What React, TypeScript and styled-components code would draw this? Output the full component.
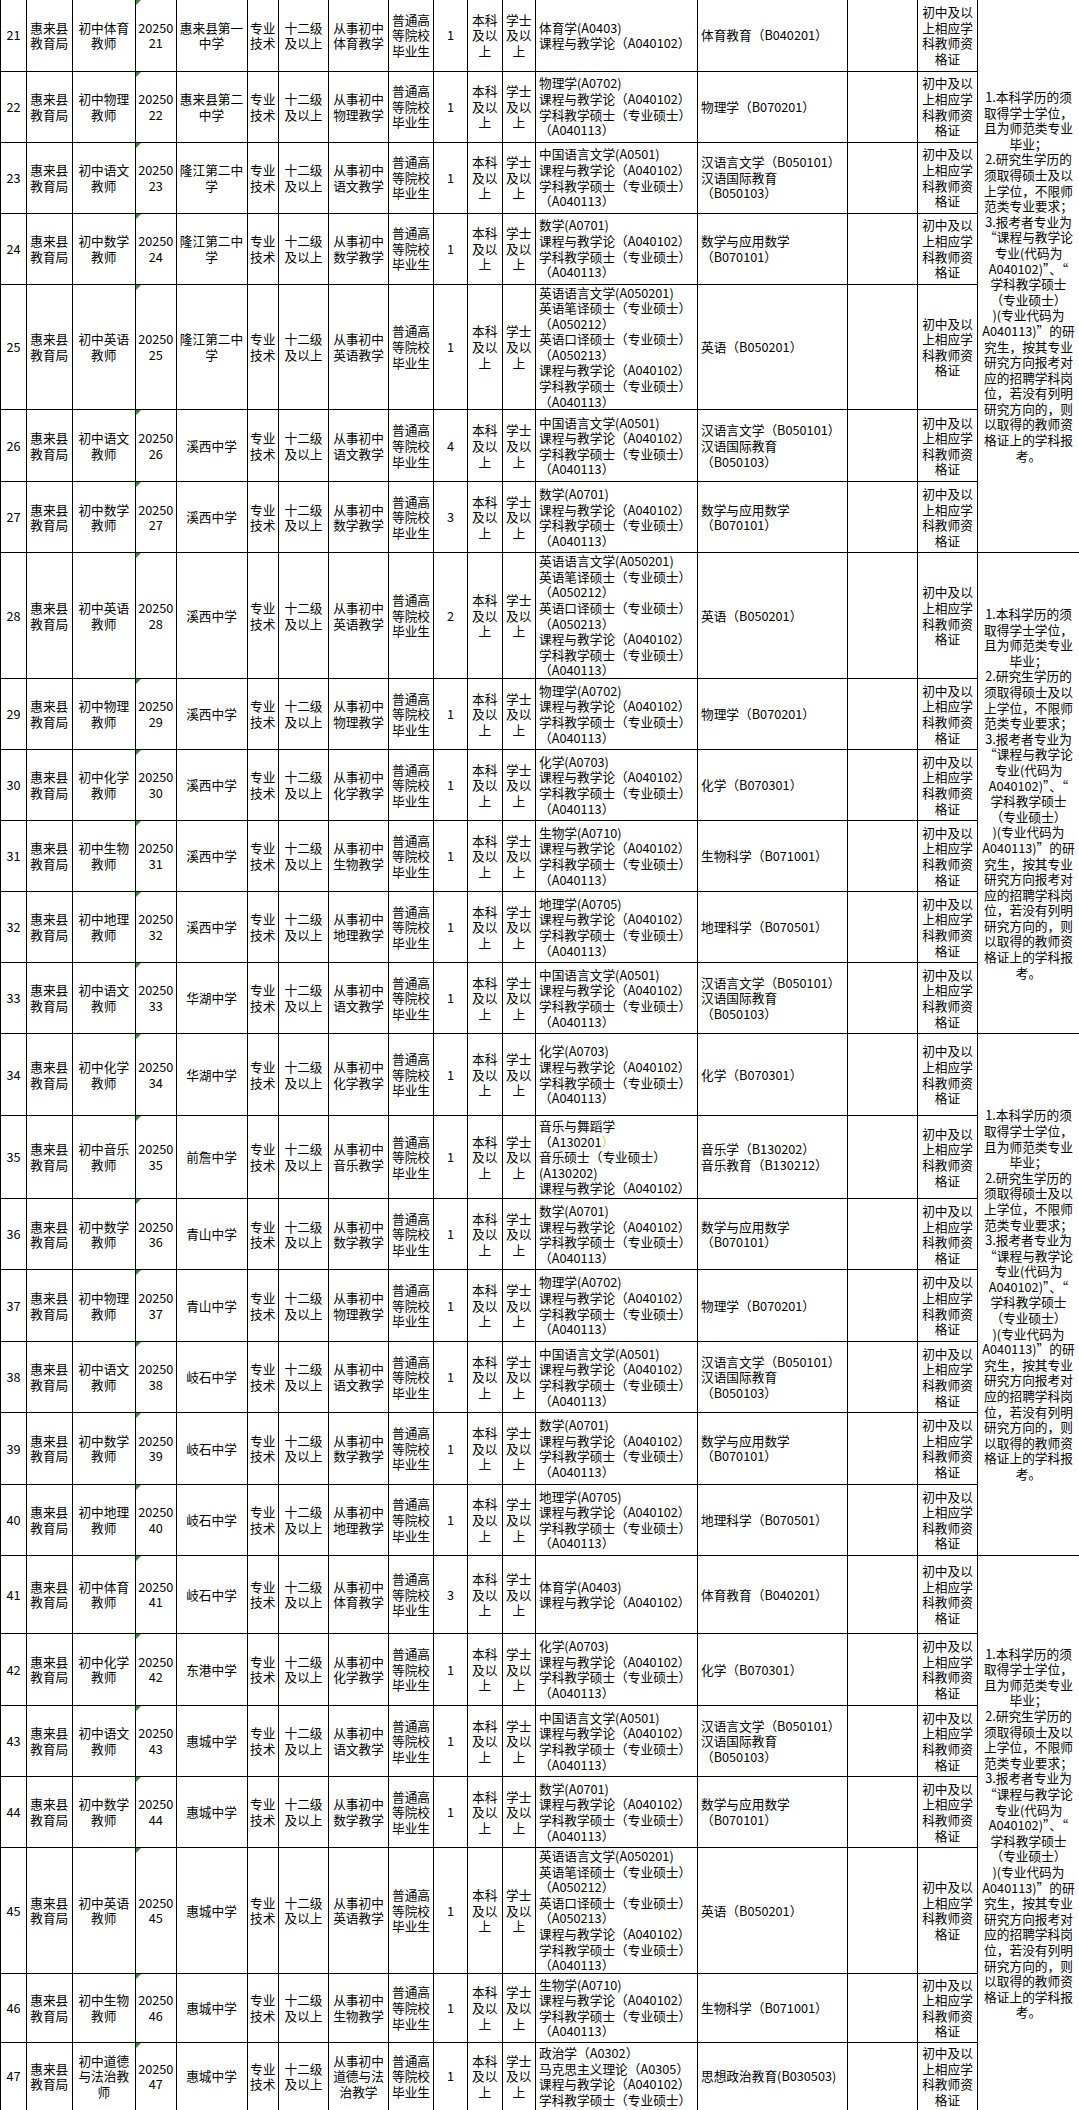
import React from "react";
import styled, { createGlobalStyle } from "styled-components";

const GlobalStyle = createGlobalStyle`
  html, body {
    margin: 0;
    padding: 0;
    background: #fff;
  }
  body {
    font-family: "Noto Sans CJK SC", "Noto Sans", sans-serif;
    color: #000;
  }
`;

const Sheet = styled.table`
  border-collapse: collapse;
  table-layout: fixed;
  width: 1079px;
  font-size: 12.7px;
  line-height: 15.6px;
`;

const Row = styled.tr<{ $h: number }>`
  height: ${(p) => p.$h}px;
  &:first-child td {
    border-top: none;
  }
`;

const Cell = styled.td<{ $left?: boolean }>`
  border: 1px solid #000;
  padding: ${(p) => (p.$left ? "0 2px 0 3px" : "0 1px")};
  text-align: ${(p) => (p.$left ? "left" : "center")};
  vertical-align: middle;
  white-space: pre;
  overflow: hidden;
`;

// excel "number stored as text" marker
const CodeCell = styled(Cell)`
  position: relative;
  &::before {
    content: "";
    position: absolute;
    top: 0;
    left: 0;
    border-top: 5px solid #1f9a2b;
    border-right: 5px solid transparent;
  }
`;

const NoteCell = styled(Cell)`
  padding: 0 1px;
`;

const Stray = styled.span`
  color: #e0cf3a;
`;

const widths = [
  26, 45.5, 63.5, 40.5, 71, 31.5, 50, 60, 45, 34, 34.5, 33.5, 162, 150, 70, 60, 102,
];

const common = "课程与教学论（A040102）\n学科教学硕士（专业硕士）\n（A040113）";

type Subject = { grad: React.ReactNode; ug: string };

const subjects: Record<string, Subject> = {
  体育: { grad: "体育学(A0403)\n课程与教学论（A040102）", ug: "体育教育（B040201）" },
  物理: { grad: "物理学(A0702)\n" + common, ug: "物理学（B070201）" },
  语文: {
    grad: "中国语言文学(A0501)\n" + common,
    ug: "汉语言文学（B050101）\n汉语国际教育\n（B050103）",
  },
  数学: { grad: "数学(A0701)\n" + common, ug: "数学与应用数学\n（B070101）" },
  英语: {
    grad:
      "英语语言文学(A050201)\n英语笔译硕士（专业硕士）\n（A050212）\n英语口译硕士（专业硕士）\n（A050213）\n" +
      common,
    ug: "英语（B050201）",
  },
  化学: { grad: "化学(A0703)\n" + common, ug: "化学（B070301）" },
  生物: { grad: "生物学(A0710)\n" + common, ug: "生物科学（B071001）" },
  地理: { grad: "地理学(A0705)\n" + common, ug: "地理科学（B070501）" },
  音乐: {
    grad: (
      <>
        音乐与舞蹈学
        <br />
        （A130201<Stray>）</Stray>
        <br />
        音乐硕士（专业硕士）
        <br />
        (A130202)
        <br />
        课程与教学论（A040102）
      </>
    ),
    ug: "音乐学（B130202）\n音乐教育（B130212）",
  },
  道德与法治: {
    grad: "政治学（A0302）\n马克思主义理论（A0305）\n课程与教学论（A040102）\n学科教学硕士（专业硕士）",
    ug: "思想政治教育(B030503)",
  },
};

const note = [
  "1.本科学历的须",
  "取得学士学位，",
  "且为师范类专业",
  "毕业；",
  "2.研究生学历的",
  "须取得硕士及以",
  "上学位，不限师",
  "范类专业要求；",
  "3.报考者专业为",
  "“课程与教学论",
  "专业(代码为",
  "A040102)”、“",
  "学科教学硕士",
  "（专业硕士）",
  ")(专业代码为",
  "A040113)”的研",
  "究生，按其专业",
  "研究方向报考对",
  "应的招聘学科岗",
  "位，若没有列明",
  "研究方向的，则",
  "以取得的教师资",
  "格证上的学科报",
  "考。",
].join("\n");

type Post = { no: number; sub: string; school: string; count: number; h: number; span?: number };

const posts: Post[] = [
  { no: 21, sub: "体育", school: "惠来县第一\n中学", count: 1, h: 71, span: 7 },
  { no: 22, sub: "物理", school: "惠来县第二\n中学", count: 1, h: 71 },
  { no: 23, sub: "语文", school: "隆江第二中\n学", count: 1, h: 71 },
  { no: 24, sub: "数学", school: "隆江第二中\n学", count: 1, h: 71 },
  { no: 25, sub: "英语", school: "隆江第二中\n学", count: 1, h: 125 },
  { no: 26, sub: "语文", school: "溪西中学", count: 4, h: 72 },
  { no: 27, sub: "数学", school: "溪西中学", count: 3, h: 71 },
  { no: 28, sub: "英语", school: "溪西中学", count: 2, h: 125, span: 6 },
  { no: 29, sub: "物理", school: "溪西中学", count: 1, h: 71 },
  { no: 30, sub: "化学", school: "溪西中学", count: 1, h: 71 },
  { no: 31, sub: "生物", school: "溪西中学", count: 1, h: 71 },
  { no: 32, sub: "地理", school: "溪西中学", count: 1, h: 71 },
  { no: 33, sub: "语文", school: "华湖中学", count: 1, h: 71 },
  { no: 34, sub: "化学", school: "华湖中学", count: 1, h: 82, span: 7 },
  { no: 35, sub: "音乐", school: "前詹中学", count: 1, h: 83 },
  { no: 36, sub: "数学", school: "青山中学", count: 1, h: 71.4 },
  { no: 37, sub: "物理", school: "青山中学", count: 1, h: 71.4 },
  { no: 38, sub: "语文", school: "岐石中学", count: 1, h: 71.4 },
  { no: 39, sub: "数学", school: "岐石中学", count: 1, h: 71.4 },
  { no: 40, sub: "地理", school: "岐石中学", count: 1, h: 71.4 },
  { no: 41, sub: "体育", school: "岐石中学", count: 3, h: 78, span: 7 },
  { no: 42, sub: "化学", school: "东港中学", count: 1, h: 72 },
  { no: 43, sub: "语文", school: "惠城中学", count: 1, h: 71 },
  { no: 44, sub: "数学", school: "惠城中学", count: 1, h: 71 },
  { no: 45, sub: "英语", school: "惠城中学", count: 1, h: 125 },
  { no: 46, sub: "生物", school: "惠城中学", count: 1, h: 69 },
  { no: 47, sub: "道德与法治", school: "惠城中学", count: 1, h: 68 },
];

const postName = (sub: string) =>
  sub.length > 2 ? "初中道德\n与法治教\n师" : `初中${sub}\n教师`;
const workName = (sub: string) =>
  sub.length > 2 ? "从事初中\n道德与法\n治教学" : `从事初中\n${sub}教学`;

export default function App() {
  return (
    <>
      <GlobalStyle />
      <Sheet>
        <colgroup>
          {widths.map((w, i) => (
            <col key={i} style={{ width: w }} />
          ))}
        </colgroup>
        <tbody>
          {posts.map((p) => {
            const s = subjects[p.sub];
            return (
              <Row key={p.no} $h={p.h}>
                <Cell>{p.no}</Cell>
                <Cell>{"惠来县\n教育局"}</Cell>
                <Cell>{postName(p.sub)}</Cell>
                <CodeCell>{`20250\n${p.no}`}</CodeCell>
                <Cell>{p.school}</Cell>
                <Cell>{"专业\n技术"}</Cell>
                <Cell>{"十二级\n及以上"}</Cell>
                <Cell>{workName(p.sub)}</Cell>
                <Cell>{"普通高\n等院校\n毕业生"}</Cell>
                <Cell>{p.count}</Cell>
                <Cell>{"本科\n及以\n上"}</Cell>
                <Cell>{"学士\n及以\n上"}</Cell>
                <Cell $left>{s.grad}</Cell>
                <Cell $left>{s.ug}</Cell>
                <Cell />
                <Cell>{"初中及以\n上相应学\n科教师资\n格证"}</Cell>
                {p.span && <NoteCell rowSpan={p.span}>{note}</NoteCell>}
              </Row>
            );
          })}
        </tbody>
      </Sheet>
    </>
  );
}
